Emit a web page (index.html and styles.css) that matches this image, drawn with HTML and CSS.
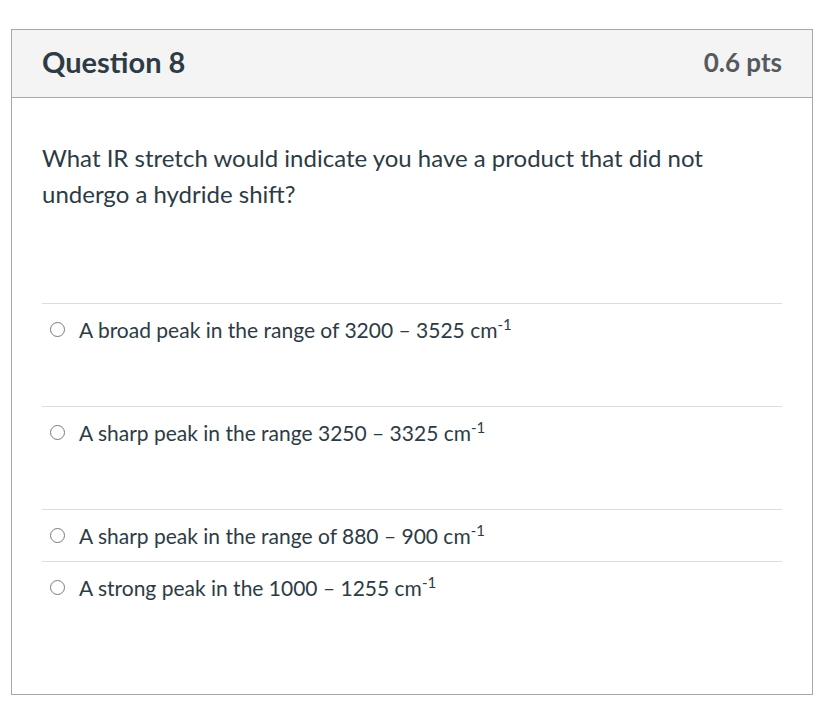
FILE: index.html
```html
<!DOCTYPE html>
<html lang="en">
<head>
<meta charset="utf-8">
<title>Question 8</title>
<link rel="stylesheet" href="styles.css">
</head>
<body>
<div class="card">
  <div class="header">
    <h2 class="title">Question 8</h2>
    <span class="pts">0.6 pts</span>
  </div>
  <div class="content">
    <p class="question">What IR stretch would indicate you have a product that did not undergo a hydride shift?</p>
    <div class="answers">
      <div class="answer tall">
        <label class="row"><span class="radio"></span><span>A broad peak in the range of 3200 – 3525 cm<sup>-1</sup></span></label>
      </div>
      <div class="answer tall">
        <label class="row"><span class="radio"></span><span>A sharp peak in the range 3250 – 3325 cm<sup>-1</sup></span></label>
      </div>
      <div class="answer">
        <label class="row"><span class="radio"></span><span>A sharp peak in the range of 880 – 900 cm<sup>-1</sup></span></label>
      </div>
      <div class="answer">
        <label class="row"><span class="radio"></span><span>A strong peak in the 1000 – 1255 cm<sup>-1</sup></span></label>
      </div>
    </div>
  </div>
</div>
</body>
</html>
```

FILE: styles.css
```css
html, body {
  margin: 0;
  padding: 0;
  background: #ffffff;
}
body {
  padding: 29px 0 0 11px;
  font-family: Lato, "Noto Sans", sans-serif;
  color: #2d3b45;
}
.card {
  width: 800px;
  height: 664px;
  border: 1px solid #a8a8a8;
  display: flex;
  flex-direction: column;
}
.header {
  height: 63px;
  background: #f4f4f4;
  border-bottom: 1px solid #a8a8a8;
  display: flex;
  align-items: center;
  justify-content: space-between;
  padding: 0 30px 4px 30px;
}
.title {
  margin: 0;
  font-size: 29px;
  font-weight: 700;
  color: #2d3b45;
}
.pts {
  font-size: 26px;
  font-weight: 700;
  color: #555a5e;
}
.content {
  padding: 42px 30px 0 30px;
}
.question {
  margin: 0;
  font-size: 24px;
  line-height: 36px;
}
.answers {
  margin-top: 91px;
}
.answer {
  border-top: 1px solid #dcdcdc;
}
.answer.tall {
  padding-bottom: 51px;
}
.row {
  height: 51px;
  display: flex;
  align-items: center;
  font-size: 21px;
  padding-left: 8px;
}
.radio {
  width: 13px;
  height: 13px;
  border: 1.5px solid #7a7a7a;
  border-radius: 50%;
  margin-right: 14px;
  flex: none;
}
sup {
  font-size: 15px;
  line-height: 0;
  vertical-align: 8px;
}
```
